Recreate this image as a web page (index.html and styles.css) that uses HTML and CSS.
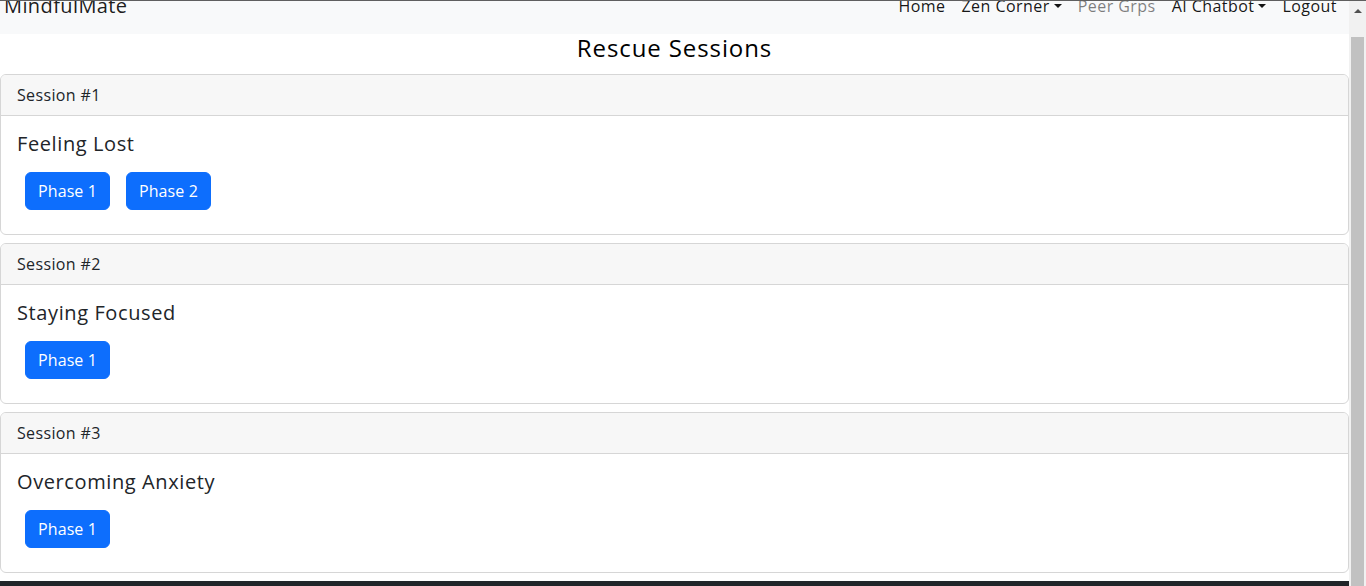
FILE: index.html
```html
<!DOCTYPE html>
<html lang="en">
<head>
<meta charset="utf-8">
<title>MindfulMate - Rescue Sessions</title>
<link rel="stylesheet" href="styles.css">
</head>
<body>
<div class="topline"></div>
<div class="window">
  <div class="page">
    <nav class="navbar">
      <a class="brand" href="#">MindfulMate</a>
      <ul class="nav">
        <li><a class="nav-link" href="#">Home</a></li>
        <li><a class="nav-link dropdown" href="#">Zen Corner</a></li>
        <li><a class="nav-link muted" href="#">Peer Grps</a></li>
        <li><a class="nav-link dropdown" href="#">AI Chatbot</a></li>
        <li><a class="nav-link" href="#">Logout</a></li>
      </ul>
    </nav>
    <h3 class="page-title">Rescue Sessions</h3>
    <div class="card">
      <div class="card-header">Session #1</div>
      <div class="card-body">
        <h5 class="card-title">Feeling Lost</h5>
        <div class="actions">
          <a class="btn" href="#">Phase 1</a>
          <a class="btn" href="#">Phase 2</a>
        </div>
      </div>
    </div>
    <div class="card">
      <div class="card-header">Session #2</div>
      <div class="card-body">
        <h5 class="card-title">Staying Focused</h5>
        <div class="actions">
          <a class="btn" href="#">Phase 1</a>
        </div>
      </div>
    </div>
    <div class="card">
      <div class="card-header">Session #3</div>
      <div class="card-body">
        <h5 class="card-title">Overcoming Anxiety</h5>
        <div class="actions">
          <a class="btn" href="#">Phase 1</a>
        </div>
      </div>
    </div>
    <footer class="footer"></footer>
  </div>
  <div class="scrollbar">
    <div class="scroll-arrow"></div>
    <div class="scroll-thumb"></div>
  </div>
</div>
</body>
</html>
```
FILE: styles.css
```css
* { box-sizing: border-box; }
html, body {
  margin: 0;
  padding: 0;
  height: 586px;
  overflow: hidden;
}
body {
  font-family: "Open Sans", "Liberation Sans", sans-serif;
  font-size: 16px;
  line-height: 1.5;
  letter-spacing: 0.35px;
  color: #212529;
  background: #fff;
}
.topline {
  height: 1px;
  background: #5f5f5f;
}
.window {
  display: flex;
  height: 585px;
}
.page {
  flex: 1;
  min-width: 0;
  overflow: hidden;
}
.navbar {
  height: 33px;
  background: #f8f9fa;
  display: flex;
  justify-content: space-between;
  align-items: flex-start;
  padding: 0 12px 0 4px;
  overflow: hidden;
}
.brand {
  font-size: 20px;
  line-height: 30px;
  letter-spacing: 0.4px;
  margin-top: -10px;
  color: rgba(0,0,0,.9);
  text-decoration: none;
}
.nav {
  list-style: none;
  margin: -7px 0 0 0;
  padding: 0;
  display: flex;
  gap: 16px;
}
.nav-link {
  display: block;
  line-height: 24px;
  letter-spacing: 0.45px;
  color: rgba(0,0,0,.92);
  text-decoration: none;
}
.nav-link.muted { color: rgba(0,0,0,.5); }
.dropdown::after {
  content: "";
  display: inline-block;
  margin-left: 4px;
  vertical-align: 4px;
  border-top: 4.8px solid;
  border-right: 4px solid transparent;
  border-left: 4px solid transparent;
}
.page-title {
  margin: 0 0 12px;
  font-size: 24px;
  font-weight: 400;
  line-height: 28px;
  letter-spacing: 0.9px;
  text-align: center;
  color: #000;
}
.card {
  border: 1px solid #d6d6d6;
  border-radius: 6px;
  margin-bottom: 8px;
  overflow: hidden;
}
.card-header {
  padding: 8px 16px;
  line-height: 24px;
  background: #f7f7f7;
  border-bottom: 1px solid #d6d6d6;
}
.card-body {
  padding: 16px;
}
.card-title {
  margin: 0 0 8px;
  font-size: 20px;
  font-weight: 400;
  line-height: 24px;
  letter-spacing: 0.6px;
}
.actions {
  display: flex;
}
.btn {
  display: inline-block;
  margin: 8px;
  padding: 6px 12px;
  line-height: 24px;
  letter-spacing: 0.1px;
  border: 1px solid #0d6efd;
  border-radius: 6px;
  background: #0d6efd;
  color: #fff;
  text-decoration: none;
}
.footer {
  height: 40px;
  background: #212529;
}
.scrollbar {
  width: 17px;
  background: #f1f1f1;
  display: flex;
  flex-direction: column;
  align-items: center;
}
.scroll-arrow {
  margin-top: 8px;
  width: 0;
  height: 0;
  border-left: 4px solid transparent;
  border-right: 4px solid transparent;
  border-bottom: 4px solid #505050;
}
.scroll-thumb {
  margin-top: 24px;
  width: 13px;
  flex: 1;
  background: #c1c1c1;
}
```
